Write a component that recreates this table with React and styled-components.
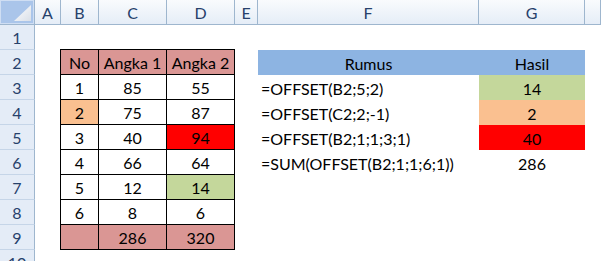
import React from 'react';
import styled, { createGlobalStyle } from 'styled-components';

const GlobalStyle = createGlobalStyle`
  html, body {
    margin: 0;
    padding: 0;
    background: #fff;
  }
  body {
    font-family: Lato, "Liberation Sans", sans-serif;
    font-size: 16px;
    overflow: hidden;
  }
`;

const COLS = ['A', 'B', 'C', 'D', 'E', 'F', 'G', ''];
const ROW_COUNT = 10;

const Sheet = styled.div`
  display: grid;
  grid-template-columns: 35px 26px 38px 68px 68px 23px 221px 106px 1fr;
  grid-auto-rows: 25px;
  width: 601px;
  height: 261px;
  overflow: hidden;
  color: #000;
`;

const Corner = styled.div`
  position: relative;
  box-sizing: border-box;
  background: #aac5ea;
  border-right: 1px solid #9eb6ce;
  border-bottom: 1px solid #9eb6ce;
  box-shadow: inset 1px 1px 0 #cfdef3, inset -1px -1px 0 #cfdef3;

  svg {
    position: absolute;
    right: 3px;
    bottom: 3px;
  }
`;

const ColHead = styled.div`
  box-sizing: border-box;
  display: flex;
  align-items: center;
  justify-content: center;
  padding-top: 1px;
  background: linear-gradient(#f9fbfd, #e5edf7);
  border-right: 1px solid #9eb6ce;
  border-bottom: 1px solid #9eb6ce;
  color: #27416b;
`;

const RowHead = styled.div`
  box-sizing: border-box;
  display: flex;
  align-items: center;
  justify-content: center;
  padding-top: 1px;
  background: #e4ecf7;
  border-right: 1px solid #9eb6ce;
  border-bottom: 1px solid #c5d5e8;
  color: #27416b;
`;

const Cell = styled.div`
  box-sizing: border-box;
  display: flex;
  align-items: center;
  justify-content: ${(p) => (p.$left ? 'flex-start' : 'center')};
  padding: 1px 0 0 ${(p) => (p.$left ? '3px' : '0')};
  white-space: nowrap;
  background: ${(p) => p.$fill || '#fff'};
`;

// bordered cell of the B2:D9 block
const BoxCell = styled(Cell)`
  border-right: 1px solid #000;
  border-bottom: 1px solid #000;
  box-shadow: ${(p) =>
    [p.$first && '-1px 0 0 #000', p.$top && '0 -1px 0 #000', p.$first && p.$top && '-1px -1px 0 #000']
      .filter(Boolean)
      .join(', ') || 'none'};
`;

const PINK = '#da9694';
const ORANGE = '#fac090';
const RED = '#ff0000';
const GREEN = '#c4d79b';
const BLUE = '#8db4e2';

const block = [
  [{ v: 'No', f: PINK }, { v: 'Angka 1', f: PINK }, { v: 'Angka 2', f: PINK }],
  [{ v: '1' }, { v: '85' }, { v: '55' }],
  [{ v: '2', f: ORANGE }, { v: '75' }, { v: '87' }],
  [{ v: '3' }, { v: '40' }, { v: '94', f: RED }],
  [{ v: '4' }, { v: '66' }, { v: '64' }],
  [{ v: '5' }, { v: '12' }, { v: '14', f: GREEN }],
  [{ v: '6' }, { v: '8' }, { v: '6' }],
  [{ v: '', f: PINK }, { v: '286', f: PINK }, { v: '320', f: PINK }],
];

const formulas = [
  { f: 'Rumus', r: 'Hasil', ff: BLUE, rf: BLUE, head: true },
  { f: '=OFFSET(B2;5;2)', r: '14', rf: GREEN },
  { f: '=OFFSET(C2;2;-1)', r: '2', rf: ORANGE },
  { f: '=OFFSET(B2;1;1;3;1)', r: '40', rf: RED },
  { f: '=SUM(OFFSET(B2;1;1;6;1))', r: '286' },
];

function Row({ n }) {
  const b = block[n - 2];
  const fm = formulas[n - 2];
  return (
    <>
      <RowHead>{n}</RowHead>
      <Cell />
      {b
        ? b.map((c, i) => (
            <BoxCell key={i} $fill={c.f} $first={i === 0} $top={n === 2}>
              {c.v}
            </BoxCell>
          ))
        : [<Cell key="b" />, <Cell key="c" />, <Cell key="d" />]}
      <Cell />
      {fm ? (
        <>
          <Cell $fill={fm.ff} $left={!fm.head}>{fm.f}</Cell>
          <Cell $fill={fm.rf}>{fm.r}</Cell>
        </>
      ) : (
        <>
          <Cell />
          <Cell />
        </>
      )}
      <Cell />
    </>
  );
}

export default function App() {
  return (
    <>
      <GlobalStyle />
      <Sheet>
        <Corner>
          <svg width="17" height="16" viewBox="0 0 17 16">
            <defs>
              <linearGradient id="tri" x1="0" y1="0" x2="1" y2="1">
                <stop offset="0" stopColor="#ffffff" />
                <stop offset="1" stopColor="#d9dfe8" />
              </linearGradient>
            </defs>
            <polygon points="17,0 17,16 0,16" fill="url(#tri)" />
          </svg>
        </Corner>
        {COLS.map((c, i) => (
          <ColHead key={i}>{c}</ColHead>
        ))}
        {Array.from({ length: ROW_COUNT }, (_, i) => (
          <Row key={i} n={i + 1} />
        ))}
      </Sheet>
    </>
  );
}
